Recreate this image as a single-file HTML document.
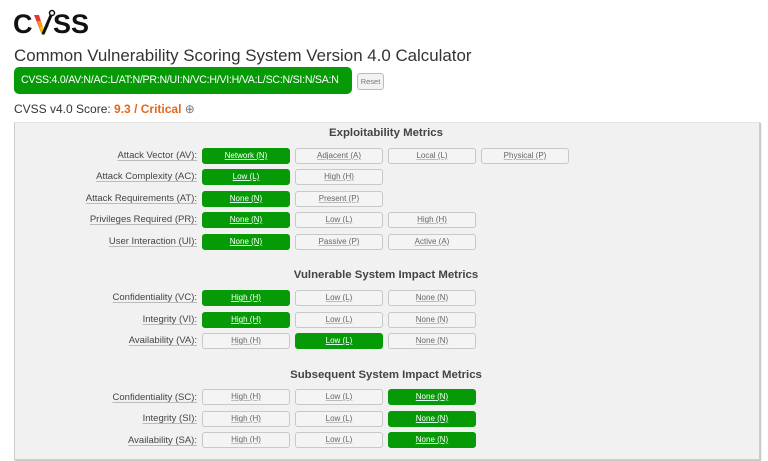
<!DOCTYPE html>
<html><head><meta charset="utf-8"><style>
*{margin:0;padding:0;box-sizing:border-box}
body{width:768px;height:461px;background:#fff;font-family:"Liberation Sans",sans-serif;position:relative;overflow:hidden;color:#333}
.abs{position:absolute}
.title{left:14px;top:46px;font-size:16.9px;color:#333;white-space:nowrap}
.vec{left:14px;top:67px;width:338px;height:27px;background:#079a07;border-radius:5px;color:#fff;font-size:10.6px;line-height:27px;padding-left:7px;white-space:nowrap;letter-spacing:-0.25px;overflow:hidden}
.reset{left:357px;top:73px;width:27px;height:17px;border:1px solid #bbb;border-radius:3px;background:#f2f2f2;font-size:7.5px;color:#777;text-align:center;line-height:15px}
.score{left:14px;top:102px;font-size:12px;color:#333;white-space:nowrap}
.score b{color:#e06a1b;font-weight:bold}
.panel{left:14px;top:122px;width:746px;height:338px;background:#f1f1f1;border:1px solid #ccc;border-top-color:#e4e4e4;box-shadow:1px 1px 1px #bbb}
.h{position:absolute;left:0;width:772px;text-align:center;font-size:11.4px;font-weight:bold;color:#444}
.lbl{position:absolute;right:calc(768px - 197px);font-size:9.5px;color:#444;white-space:nowrap;text-decoration:underline;text-decoration-color:#bbb;text-underline-offset:2px}
.b{position:absolute;width:88px;height:16px;border:1px solid #c8c8c8;border-radius:3px;background:#f4f4f4;color:#666;font-size:8px;text-align:center;line-height:14px;text-decoration:underline;text-decoration-color:#bbb}
.b.on{background:#079a07;border-color:#079a07;color:#fff;text-decoration-color:#cfe}
</style></head><body>
<svg class="abs" style="left:13px;top:9px" width="80" height="28" viewBox="0 0 80 28">
<text x="0" y="24" font-family="Liberation Sans" font-weight="bold" font-size="27" fill="#111">C</text>
<polygon points="21,6 26,6 31,22 29,26" fill="#e33"/>
<polygon points="24,12 28,12 31,22 29,26" fill="#f5a000"/>
<polygon points="27,18 30,18 31,24 29,26" fill="#e8d000"/>
<polygon points="29,26 33,16 36,16 31,26" fill="#5b2"/>
<line x1="30" y1="25" x2="39" y2="4" stroke="#111" stroke-width="3"/>
<circle cx="39" cy="4" r="2.5" fill="#fff" stroke="#111" stroke-width="1.5"/>
<text x="40" y="24" font-family="Liberation Sans" font-weight="bold" font-size="27" fill="#111">SS</text>
</svg>
<div class="abs title">Common Vulnerability Scoring System Version 4.0 Calculator</div>
<div class="abs vec">CVSS:4.0/AV:N/AC:L/AT:N/PR:N/UI:N/VC:H/VI:H/VA:L/SC:N/SI:N/SA:N</div>
<div class="abs reset">Reset</div>
<div class="abs score">CVSS v4.0 Score: <b>9.3 / Critical</b> <span style="color:#777">&#x2295;</span></div>
<div class="abs panel"></div>

<div class="h" style="top:127px">Exploitability Metrics</div>
<div class="lbl" style="top:150px">Attack Vector (AV):</div>
<div class="b on" style="left:202px;top:148px">Network (N)</div>
<div class="b" style="left:295px;top:148px">Adjacent (A)</div>
<div class="b" style="left:388px;top:148px">Local (L)</div>
<div class="b" style="left:481px;top:148px">Physical (P)</div>

<div class="lbl" style="top:171px">Attack Complexity (AC):</div>
<div class="b on" style="left:202px;top:169px">Low (L)</div>
<div class="b" style="left:295px;top:169px">High (H)</div>

<div class="lbl" style="top:193px">Attack Requirements (AT):</div>
<div class="b on" style="left:202px;top:191px">None (N)</div>
<div class="b" style="left:295px;top:191px">Present (P)</div>

<div class="lbl" style="top:214px">Privileges Required (PR):</div>
<div class="b on" style="left:202px;top:212px">None (N)</div>
<div class="b" style="left:295px;top:212px">Low (L)</div>
<div class="b" style="left:388px;top:212px">High (H)</div>

<div class="lbl" style="top:236px">User Interaction (UI):</div>
<div class="b on" style="left:202px;top:234px">None (N)</div>
<div class="b" style="left:295px;top:234px">Passive (P)</div>
<div class="b" style="left:388px;top:234px">Active (A)</div>

<div class="h" style="top:269px">Vulnerable System Impact Metrics</div>
<div class="lbl" style="top:292px">Confidentiality (VC):</div>
<div class="b on" style="left:202px;top:290px">High (H)</div>
<div class="b" style="left:295px;top:290px">Low (L)</div>
<div class="b" style="left:388px;top:290px">None (N)</div>

<div class="lbl" style="top:314px">Integrity (VI):</div>
<div class="b on" style="left:202px;top:312px">High (H)</div>
<div class="b" style="left:295px;top:312px">Low (L)</div>
<div class="b" style="left:388px;top:312px">None (N)</div>

<div class="lbl" style="top:335px">Availability (VA):</div>
<div class="b" style="left:202px;top:333px">High (H)</div>
<div class="b on" style="left:295px;top:333px">Low (L)</div>
<div class="b" style="left:388px;top:333px">None (N)</div>

<div class="h" style="top:369px">Subsequent System Impact Metrics</div>
<div class="lbl" style="top:392px">Confidentiality (SC):</div>
<div class="b" style="left:202px;top:389px">High (H)</div>
<div class="b" style="left:295px;top:389px">Low (L)</div>
<div class="b on" style="left:388px;top:389px">None (N)</div>

<div class="lbl" style="top:413px">Integrity (SI):</div>
<div class="b" style="left:202px;top:411px">High (H)</div>
<div class="b" style="left:295px;top:411px">Low (L)</div>
<div class="b on" style="left:388px;top:411px">None (N)</div>

<div class="lbl" style="top:435px">Availability (SA):</div>
<div class="b" style="left:202px;top:432px">High (H)</div>
<div class="b" style="left:295px;top:432px">Low (L)</div>
<div class="b on" style="left:388px;top:432px">None (N)</div>
</body></html>
